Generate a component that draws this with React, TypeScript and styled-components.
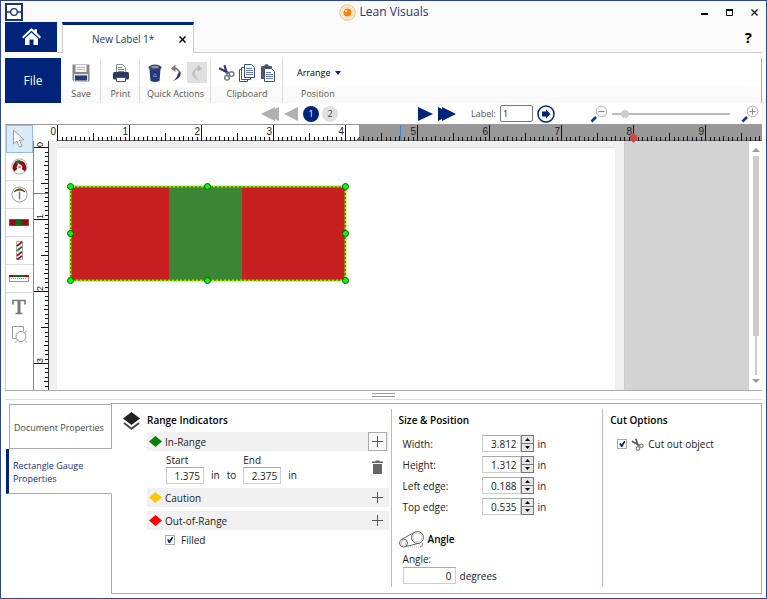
import React, { useEffect, useState } from "react";
import styled, { createGlobalStyle, css } from "styled-components";

const navy = "#00247a";
const sans = '"Open Sans", "Noto Sans", sans-serif';

const GlobalStyle = createGlobalStyle`
  * { box-sizing: border-box; }
  body { margin: 0; background: #fff; }
  button, input { font: inherit; color: inherit; margin: 0; }
  button { padding: 0; border: 0; background: none; cursor: pointer; }
  svg { display: block; flex: none; }
`;

const Window = styled.div`
  display: flex;
  flex-direction: column;
  min-height: 100vh;
  border: 1px solid #2b468c;
  font: 10px/14px ${sans};
  color: #222;
  background: #fff;
`;

/* Title bar and document tabs */

const Header = styled.header`
  padding: 1px 4px 0;
  background: #fafafa;
`;

const TitleBar = styled.div`
  display: grid;
  grid-template-columns: 1fr auto 1fr;
  align-items: center;
  height: 20px;
`;

const Title = styled.h1`
  display: flex;
  align-items: center;
  gap: 4px;
  margin: 0;
  font-size: 12px;
  font-weight: 400;
  color: #1d3578;
`;

const WindowButtons = styled.div`
  display: flex;
  justify-content: flex-end;
  gap: 13px;
  padding-right: 2px;
`;

const WindowButton = styled.button`
  display: grid;
  place-items: center;
  width: 12px;
  height: 14px;
`;

const TabRow = styled.nav`
  display: flex;
  height: 31px;
`;

const HomeButton = styled.button`
  display: grid;
  place-items: center;
  width: 52px;
  height: 30px;
  background: ${navy};
`;

const TabLine = styled.div<{ $grow?: boolean }>`
  display: flex;
  align-items: center;
  justify-content: flex-end;
  flex: ${(p) => (p.$grow ? "1" : "0 0 5px")};
  border-bottom: 1px solid #ccc;
`;

const DocumentTab = styled.div`
  display: flex;
  align-items: center;
  justify-content: space-between;
  width: 132px;
  padding: 0 7px 0 29px;
  border: 1px solid #ccc;
  border-top: 3px solid ${navy};
  border-bottom: 0;
  background: #fff;
  color: #1d3578;
`;

const HelpButton = styled.button`
  padding: 0 10px;
  font-size: 15px;
  font-weight: 700;
  color: #000;
`;

/* Ribbon */

const Ribbon = styled.div`
  display: flex;
  height: 45px;
  margin: 5px 4px 0;
  border-right: 1px solid #aaa;
`;

const FileButton = styled.button`
  width: 56px;
  background: ${navy};
  color: #fff;
  font-size: 12px;
`;

const Group = styled.section<{ $width: number; $last?: boolean }>`
  display: flex;
  flex-direction: column;
  flex: ${(p) => (p.$last ? "1" : "none")};
  width: ${(p) => p.$width}px;
  ${(p) => !p.$last && "border-right: 1px solid #ddd;"}
`;

const GroupTools = styled.div<{ $gap?: number; $left?: boolean }>`
  display: flex;
  flex: 1;
  align-items: center;
  justify-content: ${(p) => (p.$left ? "flex-start" : "center")};
  gap: ${(p) => p.$gap ?? 0}px;
  padding-left: ${(p) => (p.$left ? 14 : 1)}px;
`;

const GroupCaption = styled.div<{ $left?: boolean }>`
  height: 16px;
  padding-left: ${(p) => (p.$left ? 18 : 1)}px;
  font-size: 9px;
  text-align: ${(p) => (p.$left ? "left" : "center")};
  white-space: nowrap;
  color: #555;
  background: #fafafa;
`;

const ToolButton = styled.button<{ $off?: boolean }>`
  display: grid;
  place-items: center;
  width: 20px;
  height: 21px;
  ${(p) => p.$off && "background: #e0e0e0;"}
`;

const ArrangeButton = styled.button`
  display: flex;
  align-items: center;
  gap: 4px;
  font-size: 9px;
  color: #000;
`;

/* Page navigation */

const PageBar = styled.div`
  display: flex;
  align-items: center;
  justify-content: flex-end;
  height: 21px;
  margin: 0 4px;
  padding-right: 3px;
`;

const Pages = styled.div`
  display: flex;
  flex: none;
  align-items: center;
  width: 120px;
  padding-left: 5px;
  gap: 3px;
`;

const PageButton = styled.button<{ $current?: boolean }>`
  width: 16px;
  height: 16px;
  border-radius: 50%;
  font-size: 9px;
  line-height: 15px;
  text-align: center;
  background: ${(p) => (p.$current ? navy : "#e1e1e1")};
  color: ${(p) => (p.$current ? "#fff" : "#444")};
`;

const ArrowButton = styled.button`
  margin-right: 5px;
`;

const LabelPicker = styled.label`
  display: flex;
  align-items: center;
  gap: 4px;
  margin-left: 10px;
  font-size: 9px;
  color: #555;
`;

const LabelInput = styled.input`
  width: 33px;
  height: 17px;
  padding: 0 2px;
  border: 1px solid #777;
  border-radius: 2px;
  font-size: 9px;
  color: #222;
`;

const GoButton = styled.button`
  margin: 0 35px 0 4px;
`;

const ZoomRange = styled.input`
  appearance: none;
  width: 118px;
  height: 10px;
  margin: 0 11px 0 4px;
  background: linear-gradient(#bbb, #bbb) center / 100% 2px no-repeat;
  &::-webkit-slider-thumb {
    appearance: none;
    width: 8px;
    height: 8px;
    border-radius: 50%;
    background: #ccc;
  }
`;

/* Workspace */

const Workspace = styled.main`
  display: grid;
  grid-template: 16px minmax(240px, 1fr) / 28px 16px 1fr 13px;
  flex: 1;
  margin: 0 4px;
  border-top: 1px solid #999;
  border-bottom: 1px solid #aaa;
`;

const Toolbox = styled.div`
  grid-row: 1 / 3;
  display: flex;
  flex-direction: column;
  border-left: 1px solid #ccc;
`;

const ToolboxButton = styled.button<{ $selected?: boolean; $plain?: boolean }>`
  display: grid;
  place-items: center;
  height: 28px;
  padding-right: 1px;
  border-bottom: 1px solid ${(p) => (p.$plain ? "transparent" : "#ddd")};
  ${(p) => p.$selected && "background: #dcebf8; border: 1px solid #8fc0ea;"}
`;

const TopRuler = styled.div`
  position: relative;
  grid-column: 2 / 5;
  min-width: 0;
`;

const SideRuler = styled.div`
  position: relative;
  border-left: 1px solid #888;
  border-right: 1px solid #333;
`;

const RulerDrawing = styled.svg`
  position: absolute;
  inset: 0;
  width: 100%;
  height: 100%;
  font-family: "Liberation Sans", sans-serif;
`;

const PageMark = styled.svg`
  position: absolute;
  top: 8px;
  left: 597px;
`;

const Canvas = styled.div`
  display: flex;
  min-width: 0;
  overflow: hidden;
  background: #d3d3d3;
`;

const Margins = styled.div`
  display: flex;
  flex: 0 0 576px;
  padding: 6px 9px 0 8px;
  background: #f0f0f0;
  border-right: 1px solid #ccc;
`;

const Sheet = styled.div`
  position: relative;
  flex: 1;
  border-top: 1px solid #ddd;
  background: #fff;
`;

const Gauge = styled.svg`
  position: absolute;
  left: 9px;
  top: 34px;
`;

const ScrollBar = styled.div`
  display: flex;
  flex-direction: column;
  align-items: center;
  padding: 7px 0 7px;
  gap: 4px;
`;

const ScrollTrack = styled.div`
  display: flex;
  flex: 1;
  flex-direction: column;
  align-items: center;
`;

const ScrollThumb = styled.div`
  flex: 0 0 82%;
  width: 6px;
  background: #ccc;
`;

const ScrollRest = styled.div`
  flex: 1;
  width: 2px;
  background: #ccc;
`;

const Splitter = styled.div`
  display: grid;
  place-items: center;
  height: 9px;
  margin: 0 4px 3px;
  border-bottom: 1px solid #ddd;
`;

const Grip = styled.div`
  width: 23px;
  height: 4px;
  border: 1px solid #999;
  border-width: 1px 0;
`;

/* Properties */

const Properties = styled.div`
  display: flex;
  margin: 0 4px 4px;
`;

const SideTabs = styled.div`
  flex: 0 0 107px;
  padding: 1px 0 0 1px;
  box-shadow: inset -1px 0 #aaa;
`;

const SideTab = styled.button<{ $active?: boolean }>`
  display: block;
  height: 45px;
  padding: 2px 0 0 4px;
  font-size: 9px;
  line-height: 13px;
  text-align: left;
  border: 1px solid #aaa;
  color: #444;
  ${(p) =>
    p.$active
      ? css`
          width: 106px;
          padding-right: 20px;
          border-left: 3px solid ${navy};
          border-top: 0;
          border-right-color: #fff;
          background: #fff;
          color: #12327f;
        `
      : css`
          width: 103px;
          margin-left: 3px;
        `}
`;

const Panel = styled.div`
  display: grid;
  flex: 1;
  grid-template-columns: 279fr 212fr 159fr;
  padding: 5px 0 6px;
  border: 1px solid #aaa;
  border-left: 0;
`;

const Column = styled.section`
  padding: 3px 7px 3px;
  border-left: 1px solid #b5bcc8;
`;

const RangeColumn = styled.section`
  display: grid;
  grid-template-columns: 20px 1fr;
  gap: 4px;
  padding: 3px 2px 0 11px;
`;

const Heading = styled.h2`
  display: flex;
  align-items: center;
  gap: 4px;
  height: 16px;
  margin: 0;
  font-size: 10px;
  font-weight: 600;
  color: #000;
`;

const RangeBar = styled.div`
  display: flex;
  align-items: center;
  gap: 3px;
  height: 19px;
  padding-left: 2px;
  background: #f1f1f1;
`;

const PlusButton = styled.button<{ $boxed?: boolean }>`
  display: grid;
  place-items: center;
  width: 19px;
  height: 19px;
  margin: 0 2px 0 auto;
  ${(p) => p.$boxed && "border: 1px solid #aaa; background: #f8f8f8;"}
`;

const RangeList = styled.div`
  display: flex;
  flex-direction: column;
  gap: 4px;
`;

const RangeFields = styled.div`
  display: flex;
  align-items: flex-end;
  gap: 7px;
  height: 29px;
  padding: 0 6px 0 19px;
`;

const StackedField = styled.label`
  display: flex;
  flex-direction: column;
`;

const Unit = styled.span<{ $last?: boolean }>`
  height: 17px;
  line-height: 17px;
  ${(p) => p.$last && "margin-right: auto;"}
`;

const ValueInput = styled.input<{ $width: number }>`
  width: ${(p) => p.$width}px;
  height: 17px;
  padding: 0 3px;
  border: 1px solid #ccc;
  border-top-color: #aaa;
  text-align: right;
  background: #fff;
`;

const Check = styled.label<{ $indent: number; $gap: number }>`
  display: flex;
  align-items: center;
  gap: ${(p) => p.$gap}px;
  height: 12px;
  padding-left: ${(p) => p.$indent}px;
`;

const Box = styled.input`
  appearance: none;
  display: grid;
  width: 10px;
  height: 10px;
  border: 1px solid #aaa;
  background: #fff;
  &:checked::before {
    content: "";
    margin: 1px;
    background: ${navy};
    clip-path: polygon(0 45%, 22% 35%, 40% 60%, 80% 0, 100% 0, 100% 15%, 50% 100%, 30% 100%);
  }
`;

const SizeRows = styled.div`
  display: flex;
  flex-direction: column;
  gap: 4px;
  padding: 7px 4px 16px;
`;

const SizeRow = styled.div`
  display: flex;
  align-items: center;
  height: 17px;
`;

const SizeLabel = styled.label`
  width: 79px;
`;

const Spinner = styled.div`
  display: grid;
  width: 13px;
  margin-right: 4px;
  border: 1px solid #777;
  background: #777;
  gap: 1px;
`;

const SpinButton = styled.button`
  display: grid;
  place-items: center;
  height: 7px;
  background: #e8e8e8;
`;

const AngleField = styled.div`
  display: grid;
  grid-template-columns: auto 1fr;
  gap: 1px 4px;
  align-items: center;
  padding: 5px 4px 0;
`;

const AngleLabel = styled.label`
  grid-column: 1 / 3;
`;

const CutOption = styled.div`
  padding-top: 10px;
`;

/* Drawings */

const Scissors = ({ color, size }: { color: string; size: number }) => (
  <svg width={size} height={size} viewBox="0 0 16 16" fill="none" stroke="#777" strokeWidth="1.3">
    <path d="M1 4 10 8.5M6 1 8.5 9" stroke={color} strokeWidth="2" />
    <circle cx="12.8" cy="9.5" r="2.2" />
    <circle cx="8.5" cy="13" r="2.2" />
    <path d="M8 8.5 11 9M8.4 8 8.5 11" />
  </svg>
);

const Magnifier = ({ plus }: { plus?: boolean }) => (
  <svg width="18" height="18" viewBox="0 0 18 18" fill="none">
    <path d="M1.5 16.5 6 12" stroke="#1d3578" strokeWidth="2.6" />
    <circle cx="11.5" cy="6.5" r="5.3" fill="#f7f7f7" stroke="#aaa" />
    <path d={plus ? "M8.5 6.5h6M11.5 3.5v6" : "M8.5 6.5h6"} stroke="#888" />
  </svg>
);

const Diamond = ({ fill }: { fill: string }) => (
  <svg width="13" height="11" viewBox="0 0 13 11">
    <path d="M0 5.5 6.5 0 13 5.5 6.5 11Z" fill={fill} />
  </svg>
);

const Plus = () => (
  <svg width="11" height="11" viewBox="0 0 11 11" stroke="#555">
    <path d="M0 5.5h11M5.5 0v11" />
  </svg>
);

const INCH = 72;
const tickLength = (i: number) => (i % 16 === 0 ? 16 : i % 8 === 0 ? 8 : i % 4 === 0 ? 5 : 4);
const range = (n: number) => Array.from({ length: Math.max(0, n) }, (_, i) => i);

function useWindowSize() {
  const [size, setSize] = useState({ width: window.innerWidth, height: window.innerHeight });
  useEffect(() => {
    const update = () => setSize({ width: window.innerWidth, height: window.innerHeight });
    window.addEventListener("resize", update);
    return () => window.removeEventListener("resize", update);
  }, []);
  return size;
}

const HorizontalRuler = ({ length }: { length: number }) => (
  <TopRuler>
    <RulerDrawing>
      <rect x="326" width="100%" height="16" fill="#999" />
      <path d={`M24 15.5H${length + 60}`} stroke="#666" />
      {range(Math.ceil((length * 16) / INCH)).map((i) => {
        const x = 24.5 + Math.round((i * INCH) / 16);
        return <path key={i} d={`M${x} 16V${16 - tickLength(i)}`} stroke="#111" />;
      })}
      <path d="M367.5 0V15" stroke="#3f86d8" />
      {range(Math.floor(length / INCH) + 1).map((n) => (
        <text key={n} x={23 + n * INCH} y="10" textAnchor="end" fontSize="10" fill="#222">
          {n}
        </text>
      ))}
      <path d="M324 16v-2l2-2 2 2v2z" fill="#666" />
    </RulerDrawing>
    <PageMark width="7" height="10" viewBox="0 0 7 10">
      <path d="M0 2h2V0h3v2h2v4L3.5 10 0 6Z" fill="#d04545" />
    </PageMark>
  </TopRuler>
);

const VerticalRuler = ({ length }: { length: number }) => (
  <SideRuler>
    <RulerDrawing>
      {range(Math.ceil((length * 16) / INCH)).map((i) => {
        const y = 6.5 + Math.round((i * INCH) / 16);
        return <path key={i} d={`M14 ${y}H${14 - Math.min(14, tickLength(i) - 1)}`} stroke="#111" />;
      })}
      <path d="M0 52.5H14" stroke="#3f86d8" />
      {range(Math.floor(length / INCH) + 1).map((n) => (
        <text key={n} transform={`translate(9 ${6 + n * INCH}) rotate(-90)`} fontSize="9" fill="#222">
          {n}
        </text>
      ))}
    </RulerDrawing>
  </SideRuler>
);

const handles = [
  [4, 4], [141, 4], [279, 4], [4, 51], [279, 51], [4, 98], [141, 98], [279, 98],
];

const RectangleGauge = () => (
  <Gauge width="284" height="103" viewBox="0 0 284 103">
    <rect x="4" y="4" width="275" height="95" fill="#c82020" />
    <rect x="103" y="4" width="73" height="95" fill="#3c8535" />
    <rect x="4.5" y="4.5" width="275" height="94" fill="none" stroke="#9bf000" strokeWidth="2" />
    <rect x="5" y="5" width="274" height="93" fill="none" stroke="#234a10" strokeDasharray="2 2" />
    {handles.map(([x, y]) => (
      <circle key={`${x}-${y}`} cx={x + 0.5} cy={y + 0.5} r="3" fill="#00ff00" stroke="#0a5a0a" />
    ))}
  </Gauge>
);

const Backward = ({ double }: { double?: boolean }) => (
  <svg width={double ? 18 : 14} height="14" viewBox={double ? "0 0 18 14" : "0 0 14 14"} fill="#b0b0b0">
    <path d="M0 7 14 0v14Z" />
    {double && <path d="M4 7 18 0v14Z" />}
  </svg>
);

const Forward = ({ double }: { double?: boolean }) => (
  <svg width={double ? 18 : 15} height="14" viewBox={double ? "0 0 18 14" : "0 0 15 14"} fill={navy}>
    <path d={double ? "M0 0 14 7 0 14Z" : "M0 0 15 7 0 14Z"} />
    {double && <path d="M4 0 18 7 4 14Z" />}
  </svg>
);

const sizes = [
  { id: "width", label: "Width:", value: "3.812" },
  { id: "height", label: "Height:", value: "1.312" },
  { id: "left", label: "Left edge:", value: "0.188" },
  { id: "top", label: "Top edge:", value: "0.535" },
];

const ToolIcons = {
  pointer: (
    <svg width="14" height="20" viewBox="0 0 14 20" fill="#fff" stroke="#999">
      <path d="M1.5 1v14l3.4-3 2.6 6.2 2.6-1.2-2.6-5.8 4.5-.4Z" />
    </svg>
  ),
  dial: (
    <svg width="17" height="17" viewBox="0 0 17 17" fill="none">
      <circle cx="8.5" cy="8.5" r="7.6" fill="#fff" stroke="#aaa" />
      <path d="M4.7 12.2A4.8 4.8 0 1 1 12.3 12.2" stroke="#8e0b12" strokeWidth="4" />
      <path d="M5 5.4A4.7 4.7 0 0 1 8.5 3.9" stroke="#1d6b25" strokeWidth="4" />
      <path d="M6.8 5.5 9 8.5" stroke="#fff" strokeWidth="1.2" />
      <circle cx="8.5" cy="9" r="1.2" fill="#c66" />
    </svg>
  ),
  needle: (
    <svg width="17" height="17" viewBox="0 0 17 17" fill="none">
      <circle cx="8.5" cy="8.5" r="7.6" fill="#fff" stroke="#999" />
      <path d="M3.2 5.8Q8.5 1 13.8 5.8" stroke="#c02020" strokeWidth="1.5" />
      <path d="M5.5 4.2Q8.5 2.6 11.5 4.2" stroke="#1d7b25" strokeWidth="1.8" />
      <path d="M8.5 5.5v8" stroke="#777" strokeWidth="1.4" />
    </svg>
  ),
  bar: (
    <svg width="20" height="7" viewBox="0 0 20 7">
      <path d="M0 0h20v7H0Z" fill="#8e0b12" stroke="#888" />
      <path d="M6.5.5h6v6h-6Z" fill="#0b6b1a" />
    </svg>
  ),
  stripes: (
    <svg width="7" height="19" viewBox="0 0 7 19">
      <path d="M.5.5h6v18h-6Z" fill="#fff" stroke="#aaa" />
      <path d="M1 5 6 1M1 14.8 6 10.8M1 18.5 6 15" stroke="#a01018" strokeWidth="1.8" />
      <path d="M1 9.8 6 5.8" stroke="#0b7b1a" strokeWidth="1.8" />
    </svg>
  ),
  scale: (
    <svg width="20" height="7" viewBox="0 0 20 7">
      <path d="M.5.5h19v6H.5Z" fill="#fff" stroke="#999" />
      <path d="M0 1h20" stroke="#9c1010" strokeWidth="2" />
      <path d="M5 1h10" stroke="#0b6b1a" strokeWidth="2" />
      <path d="M2 3.5h16" stroke="#888" strokeDasharray="1 1" />
    </svg>
  ),
  text: (
    <svg width="14" height="16" viewBox="0 0 14 16" fill="none" stroke="#777">
      <path d="M1 5.5v-4h12v4" strokeWidth="1.6" />
      <path d="M7 1.5V14" strokeWidth="3" />
      <path d="M3.5 14.5h7" strokeWidth="1.5" />
    </svg>
  ),
  shapes: (
    <svg width="17" height="17" viewBox="0 0 17 17" fill="none" stroke="#999">
      <path d="M5 12.5H1.5V.5h11V5" />
      <circle cx="10" cy="10.5" r="5" />
      <path d="M4 16.5 6.3 14.2M13.5 7 16 4.5M13.7 14.2 16 16.5" />
    </svg>
  ),
};

const tools: { name: string; icon: React.ReactNode; plain?: boolean }[] = [
  { name: "Select", icon: ToolIcons.pointer },
  { name: "Dial gauge", icon: ToolIcons.dial },
  { name: "Needle gauge", icon: ToolIcons.needle },
  { name: "Rectangle gauge", icon: ToolIcons.bar },
  { name: "Striped gauge", icon: ToolIcons.stripes },
  { name: "Scale gauge", icon: ToolIcons.scale },
  { name: "Text", icon: ToolIcons.text, plain: true },
  { name: "Shapes", icon: ToolIcons.shapes, plain: true },
];

export default function App() {
  const { width, height } = useWindowSize();
  return (
    <Window>
      <GlobalStyle />
      <Header>
        <TitleBar>
          <svg width="18" height="18" viewBox="0 0 18 18" fill="none" stroke="#1d3578">
            <path d="M1 1h16v16H1Z" strokeWidth="2" fill="#fff" />
            <path d="M1 9h5M12 9h5" strokeWidth="1.5" />
            <circle cx="9" cy="9" r="3.3" strokeWidth="1.3" />
          </svg>
          <Title>
            <svg width="17" height="17" viewBox="0 0 17 17" fill="none">
              <circle cx="8.5" cy="8.5" r="7.7" stroke="#f9b465" />
              <circle cx="8.5" cy="8.5" r="5.6" stroke="#fbc78c" />
              <circle cx="8.5" cy="8.5" r="4" fill="#f9820f" />
              <circle cx="7" cy="7" r="1.3" fill="#ffe3c0" />
            </svg>
            Lean Visuals
          </Title>
          <WindowButtons>
            <WindowButton aria-label="Minimize">
              <svg width="7" height="8" viewBox="0 0 7 8"><path d="M0 5h7v2H0Z" /></svg>
            </WindowButton>
            <WindowButton aria-label="Maximize">
              <svg width="7" height="7" viewBox="0 0 7 7">
                <path d="M.5 1v5.5h6V1" fill="none" stroke="#000" />
                <path d="M0 0h7v2H0Z" />
              </svg>
            </WindowButton>
            <WindowButton aria-label="Close">
              <svg width="7" height="7" viewBox="0 0 7 7" stroke="#000" strokeWidth="1.2">
                <path d="m.5.5 6 6M6.5.5l-6 6" />
              </svg>
            </WindowButton>
          </WindowButtons>
        </TitleBar>
        <TabRow>
          <HomeButton aria-label="Home">
            <svg width="19" height="18" viewBox="0 0 19 18" fill="#fff">
              <path d="M9.5 0 12.5 2.8V1.3H15v3.8L19 9l-1.3 1.5-8.2-7.7-8.2 7.7L0 9Z" />
              <path d="M9.5 4.5 16 10.5V17h-4.5v-5.5h-4V17H3v-6.5Z" />
            </svg>
          </HomeButton>
          <TabLine />
          <DocumentTab>
            New Label 1*
            <button aria-label="Close tab">
              <svg width="7" height="7" viewBox="0 0 7 7" stroke="#000" strokeWidth="1.5">
                <path d="m.5.5 6 6M6.5.5l-6 6" />
              </svg>
            </button>
          </DocumentTab>
          <TabLine $grow>
            <HelpButton>?</HelpButton>
          </TabLine>
        </TabRow>
      </Header>

      <Ribbon>
        <FileButton>File</FileButton>
        <Group $width={40}>
          <GroupTools>
            <ToolButton aria-label="Save">
              <svg width="18" height="18" viewBox="0 0 18 18">
                <path d="M.5.5h17v17H2L.5 16Z" fill="#888" />
                <path d="M3.5 1h11v7h-11Z" fill="#f4f4f4" />
                <path d="M5 3.5h8M5 5.5h8" stroke="#bbb" />
                <path d="M2 10h14v7H2Z" fill="#ddd" />
                <path d="M3 11.5h12v5H3Z" fill="#24387c" />
              </svg>
            </ToolButton>
          </GroupTools>
          <GroupCaption>Save</GroupCaption>
        </Group>
        <Group $width={39}>
          <GroupTools>
            <ToolButton aria-label="Print">
              <svg width="16" height="18" viewBox="0 0 16 18">
                <path d="M3.5 8V.5h6l3 3V8" fill="#fff" stroke="#888" />
                <path d="M5 3.5h4M5 5.5h6M5 7.5h6" stroke="#777" />
                <rect y="8" width="16" height="7.5" rx="1.5" fill="#33394f" />
                <path d="M1 10.5h14v4H1Z" fill="#24387c" />
                <path d="M3.5 13.5h9v4h-9Z" fill="#fff" stroke="#555" />
              </svg>
            </ToolButton>
          </GroupTools>
          <GroupCaption>Print</GroupCaption>
        </Group>
        <Group $width={71}>
          <GroupTools $gap={1}>
            <ToolButton aria-label="Delete">
              <svg width="14" height="18" viewBox="0 0 14 18">
                <path d="M1.5 5h11L11.5 17q-4.5 2-9 0Z" fill="#24387c" />
                <ellipse cx="7" cy="3.5" rx="6.5" ry="3" fill="#39456e" />
                <ellipse cx="7" cy="3" rx="4" ry="1.3" fill="#8b93b0" />
                <path d="M7 9.5 8.8 12.5H5.2Z" fill="none" stroke="#6f7db4" />
              </svg>
            </ToolButton>
            <ToolButton aria-label="Undo">
              <svg width="10" height="17" viewBox="0 0 10 17" fill="none">
                <path d="M1 4.5H5Q8.5 6.5 8.5 9" stroke="#777" strokeWidth="1.5" />
                <path d="M0 4.5 4.5.5V8Z" fill="#777" />
                <path d="M9.5 7.5Q11 14 2 17 7 13 6.5 10Z" fill="#24387c" />
              </svg>
            </ToolButton>
            <ToolButton $off aria-label="Redo">
              <svg width="10" height="17" viewBox="0 0 10 17" fill="none">
                <path d="M9 4.5H5Q1.5 6.5 1.5 9" stroke="#bbb" strokeWidth="1.5" />
                <path d="M10 4.5 5.5.5V8Z" fill="#bbb" />
                <path d="M.5 7.5Q-1 14 8 17 3 13 3.5 10Z" fill="#c4c4c4" />
              </svg>
            </ToolButton>
          </GroupTools>
          <GroupCaption>Quick Actions</GroupCaption>
        </Group>
        <Group $width={72}>
          <GroupTools $gap={1}>
            <ToolButton aria-label="Cut"><Scissors color="#2a3a70" size={17} /></ToolButton>
            <ToolButton aria-label="Copy">
              <svg width="16" height="18" viewBox="0 0 16 18" fill="#fff" stroke="#34519a">
                <path d="M.5 5.5h8v12h-8Z" />
                <path d="M2.5 3.5h9v12h-9Z" />
                <path d="M5.5.5h7l3 3v10h-10Z" />
                <path d="M7 4.5h6M7 6.5h7M7 8.5h7M7 10.5h7" stroke="#6a7fb8" />
              </svg>
            </ToolButton>
            <ToolButton aria-label="Paste">
              <svg width="14" height="18" viewBox="0 0 14 18">
                <path d="M0 3q0-1 1-1h2q1-2 2.5-2T8 2h2q1 0 1 1v12H0Z" fill="#555" />
                <path d="M3.5 4.5h7l3 3v10h-10Z" fill="#fff" stroke="#34519a" />
                <path d="M5 8.5h5M5 10.5h7M5 12.5h7M5 14.5h7" stroke="#6a7fb8" />
              </svg>
            </ToolButton>
          </GroupTools>
          <GroupCaption>Clipboard</GroupCaption>
        </Group>
        <Group $width={68} $last>
          <GroupTools $left>
            <ArrangeButton>
              Arrange
              <svg width="6" height="4" viewBox="0 0 6 4"><path d="M0 0h6L3 4Z" fill={navy} /></svg>
            </ArrangeButton>
          </GroupTools>
          <GroupCaption $left>Position</GroupCaption>
        </Group>
      </Ribbon>

      <PageBar>
        <ArrowButton aria-label="First page"><Backward double /></ArrowButton>
        <button aria-label="Previous page"><Backward /></button>
        <Pages>
          <PageButton $current>1</PageButton>
          <PageButton>2</PageButton>
        </Pages>
        <ArrowButton aria-label="Next page"><Forward /></ArrowButton>
        <ArrowButton aria-label="Last page"><Forward double /></ArrowButton>
        <LabelPicker>
          Label:
          <LabelInput defaultValue="1" />
        </LabelPicker>
        <GoButton aria-label="Go to label">
          <svg width="18" height="18" viewBox="0 0 18 18">
            <circle cx="9" cy="9" r="8" fill="#fff" stroke={navy} strokeWidth="1.5" />
            <path d="M5 6.5h4v-2L13.5 9 9 13.5v-2H5Z" fill={navy} />
          </svg>
        </GoButton>
        <button aria-label="Zoom out"><Magnifier /></button>
        <ZoomRange type="range" aria-label="Zoom" defaultValue={8} />
        <button aria-label="Zoom in"><Magnifier plus /></button>
      </PageBar>

      <Workspace>
        <Toolbox>
          {tools.map((t, i) => (
            <ToolboxButton key={t.name} aria-label={t.name} $selected={i === 0} $plain={t.plain}>
              {t.icon}
            </ToolboxButton>
          ))}
        </Toolbox>
        <HorizontalRuler length={width - 62} />
        <VerticalRuler length={Math.max(height - 356, 230)} />
        <Canvas>
          <Margins>
            <Sheet>
              <RectangleGauge />
            </Sheet>
          </Margins>
        </Canvas>
        <ScrollBar>
          <svg width="8" height="4" viewBox="0 0 8 4"><path d="M0 4 4 0l4 4Z" fill="#999" /></svg>
          <ScrollTrack>
            <ScrollThumb />
            <ScrollRest />
          </ScrollTrack>
          <svg width="8" height="4" viewBox="0 0 8 4"><path d="M0 0h8L4 4Z" fill="#999" /></svg>
        </ScrollBar>
      </Workspace>

      <Splitter><Grip /></Splitter>

      <Properties>
        <SideTabs role="tablist">
          <SideTab role="tab">Document Properties</SideTab>
          <SideTab role="tab" aria-selected $active>Rectangle Gauge Properties</SideTab>
        </SideTabs>
        <Panel>
          <RangeColumn>
            <svg width="17" height="18" viewBox="0 0 17 18">
              <path d="M0 6.5 8.5 0 17 6.5 8.5 13Z" fill="#222" />
              <path d="M1 11 8.5 16.8 16 11" fill="none" stroke="#444" strokeWidth="1.8" />
            </svg>
            <RangeList>
              <Heading>Range Indicators</Heading>
              <RangeBar>
                <Diamond fill="#0a800a" />
                In-Range
                <PlusButton $boxed aria-label="Add in-range"><Plus /></PlusButton>
              </RangeBar>
              <RangeFields>
                <StackedField>
                  Start
                  <ValueInput $width={38} defaultValue="1.375" />
                </StackedField>
                <Unit>in</Unit>
                <Unit>to</Unit>
                <StackedField>
                  End
                  <ValueInput $width={38} defaultValue="2.375" />
                </StackedField>
                <Unit $last>in</Unit>
                <button aria-label="Delete range">
                  <svg width="11" height="24" viewBox="0 0 11 24" fill="#666">
                    <path d="M0 1.5h3l1-1h3l1 1h3V3H0ZM1 4h9v9q0 1-1 1H2q-1 0-1-1Z" />
                  </svg>
                </button>
              </RangeFields>
              <RangeBar>
                <Diamond fill="#ffc800" />
                Caution
                <PlusButton aria-label="Add caution"><Plus /></PlusButton>
              </RangeBar>
              <RangeBar>
                <Diamond fill="#f00" />
                Out-of-Range
                <PlusButton aria-label="Add out-of-range"><Plus /></PlusButton>
              </RangeBar>
              <Check $indent={18} $gap={6}>
                <Box type="checkbox" defaultChecked />
                Filled
              </Check>
            </RangeList>
          </RangeColumn>

          <Column>
            <Heading>Size &amp; Position</Heading>
            <SizeRows>
              {sizes.map((s) => (
                <SizeRow key={s.id}>
                  <SizeLabel htmlFor={s.id}>{s.label}</SizeLabel>
                  <ValueInput id={s.id} $width={39} defaultValue={s.value} />
                  <Spinner>
                    <SpinButton aria-label={`Increase ${s.id}`}>
                      <svg width="5" height="3" viewBox="0 0 5 3"><path d="M0 3 2.5 0 5 3Z" /></svg>
                    </SpinButton>
                    <SpinButton aria-label={`Decrease ${s.id}`}>
                      <svg width="5" height="3" viewBox="0 0 5 3"><path d="M0 0h5L2.5 3Z" /></svg>
                    </SpinButton>
                  </Spinner>
                  in
                </SizeRow>
              ))}
            </SizeRows>
            <Heading>
              <svg width="25" height="17" viewBox="0 0 25 17" fill="none" stroke="#666">
                <circle cx="4.5" cy="12" r="4" />
                <circle cx="4.5" cy="12" r="2.5" stroke="#ccc" />
                <circle cx="18.5" cy="6.5" r="6" />
                <circle cx="18.5" cy="6.5" r="4.5" stroke="#ccc" />
                <path d="M3 8.2 16.5.8M6 15.7 20.5 12.2" />
                <path d="M9 16h14" stroke="#bbb" strokeDasharray="1 1" />
                <path d="M21 16q3 0 2.5-4" stroke="#e66" />
              </svg>
              Angle
            </Heading>
            <AngleField>
              <AngleLabel htmlFor="angle">Angle:</AngleLabel>
              <ValueInput id="angle" $width={53} defaultValue="0" />
              degrees
            </AngleField>
          </Column>

          <Column>
            <Heading>Cut Options</Heading>
            <CutOption>
              <Check $indent={7} $gap={4}>
                <Box type="checkbox" defaultChecked />
                <Scissors color="#555" size={13} />
                Cut out object
              </Check>
            </CutOption>
          </Column>
        </Panel>
      </Properties>
    </Window>
  );
}
